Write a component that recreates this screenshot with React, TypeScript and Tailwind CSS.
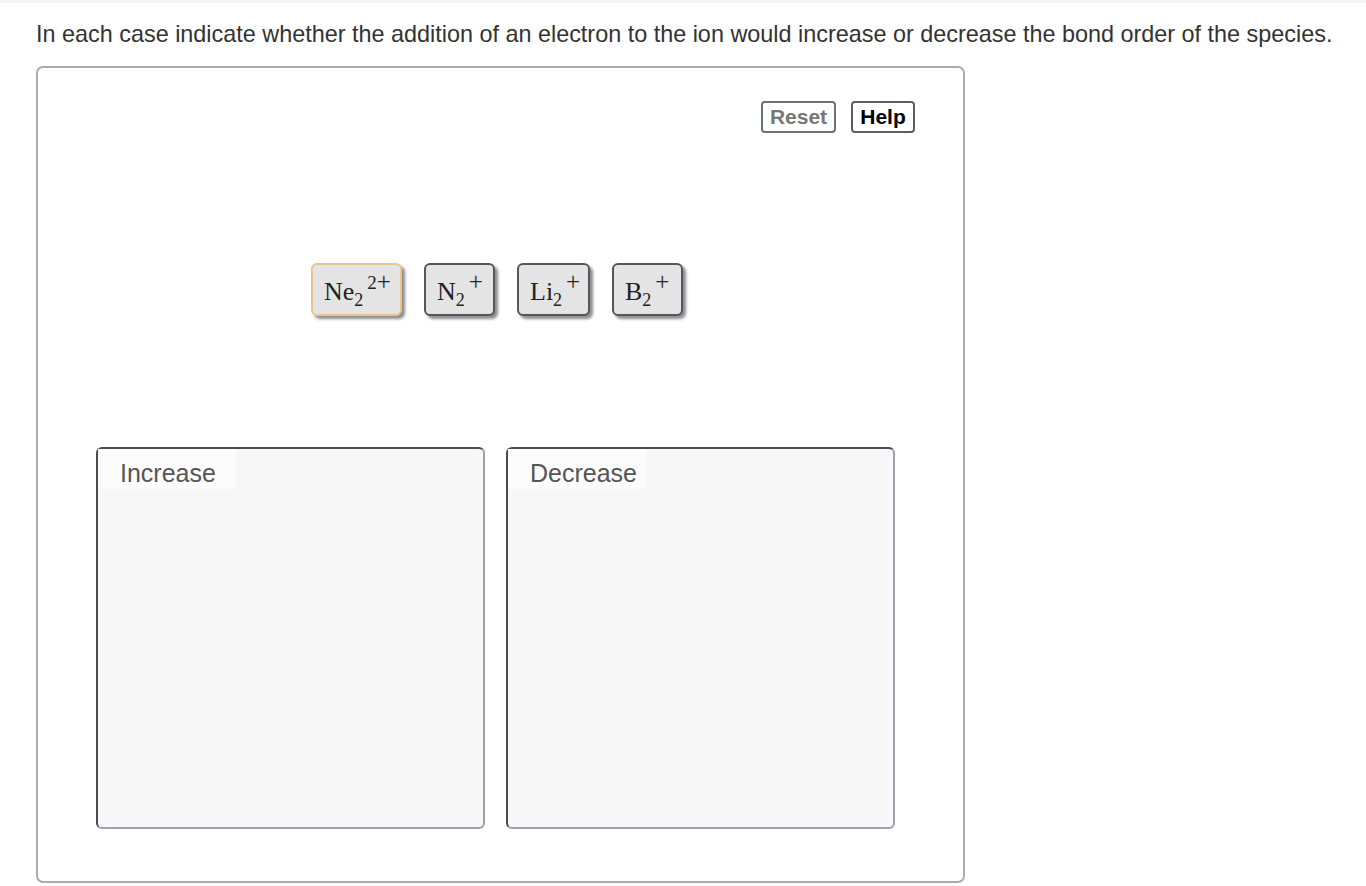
import React from "react";

function Token({ base, charge, selected, w }: { base: string; charge?: string; selected?: boolean; w: string }) {
  return (
    <div
      className={
        w +
        " h-[53px] flex items-center pl-[11px] pt-[4px] rounded-[6px] border-2 bg-[#e4e4e4] shadow-[3px_3px_3px_rgba(0,0,0,0.45)] " +
        (selected ? "border-[#e9c48f]" : "border-[#55565c]")
      }
      style={{ fontFamily: '"Liberation Serif", "DejaVu Serif", serif' }}
    >
      <span className="text-[26px] leading-none text-[#222] whitespace-nowrap">
        {base}
        <sub className="text-[18px] relative top-[6px] align-baseline">2</sub>
        <span className="relative -top-[11px] ml-[4px]">
          {charge && <span className="text-[19px]">{charge}</span>}
          <span className="text-[25px] relative top-[1px]">+</span>
        </span>
      </span>
    </div>
  );
}

function Zone({ label }: { label: string }) {
  return (
    <div className="w-[389px] h-[382px] rounded-[6px] border-2 border-t-[#4b4b52] border-l-[#4b4b52] border-r-[#a39fb0] border-b-[#a39fb0] bg-[#f7f7f7]">
      <div
        className="w-[138px] h-[40px] bg-[#fcfcfc] pl-[22px] pt-[7px] text-[25px] leading-[34px] text-[#555]"
        style={{ fontFamily: '"Liberation Sans", Arial, sans-serif' }}
      >
        {label}
      </div>
    </div>
  );
}

export default function App() {
  return (
    <div className="min-h-screen bg-white" style={{ fontFamily: '"Liberation Sans", Arial, sans-serif' }}>
      <div className="h-[3px] bg-[#f4f4f4]" />
      <p className="pl-[36px] pt-[16px] text-[23.4px] leading-[30px] text-[#333] whitespace-nowrap">
        In each case indicate whether the addition of an electron to the ion would increase or decrease the bond order of the species.
      </p>
      <div className="ml-[36px] mt-[17px] w-[929px] h-[817px] border-2 border-[#ababab] rounded-[7px] flex flex-col">
        <div className="flex justify-end gap-[15px] pt-[33px] pr-[48px]">
          <button className="h-[32px] w-[75px] border-2 border-[#6d7278] rounded-[4px] text-[21px] font-bold text-[#777] flex items-center justify-center bg-white">
            Reset
          </button>
          <button className="h-[32px] w-[64px] border-2 border-[#5a5f64] rounded-[4px] text-[21px] font-bold text-black flex items-center justify-center bg-white">
            Help
          </button>
        </div>
        <div className="flex gap-[22px] mt-[130px] pl-[273px]">
          <Token base="Ne" charge="2" selected w="w-[91px]" />
          <Token base="N" w="w-[71px]" />
          <Token base="Li" w="w-[73px]" />
          <Token base="B" w="w-[71px]" />
        </div>
        <div className="flex gap-[21px] mt-[131px] pl-[58px]">
          <Zone label="Increase" />
          <Zone label="Decrease" />
        </div>
      </div>
    </div>
  );
}
